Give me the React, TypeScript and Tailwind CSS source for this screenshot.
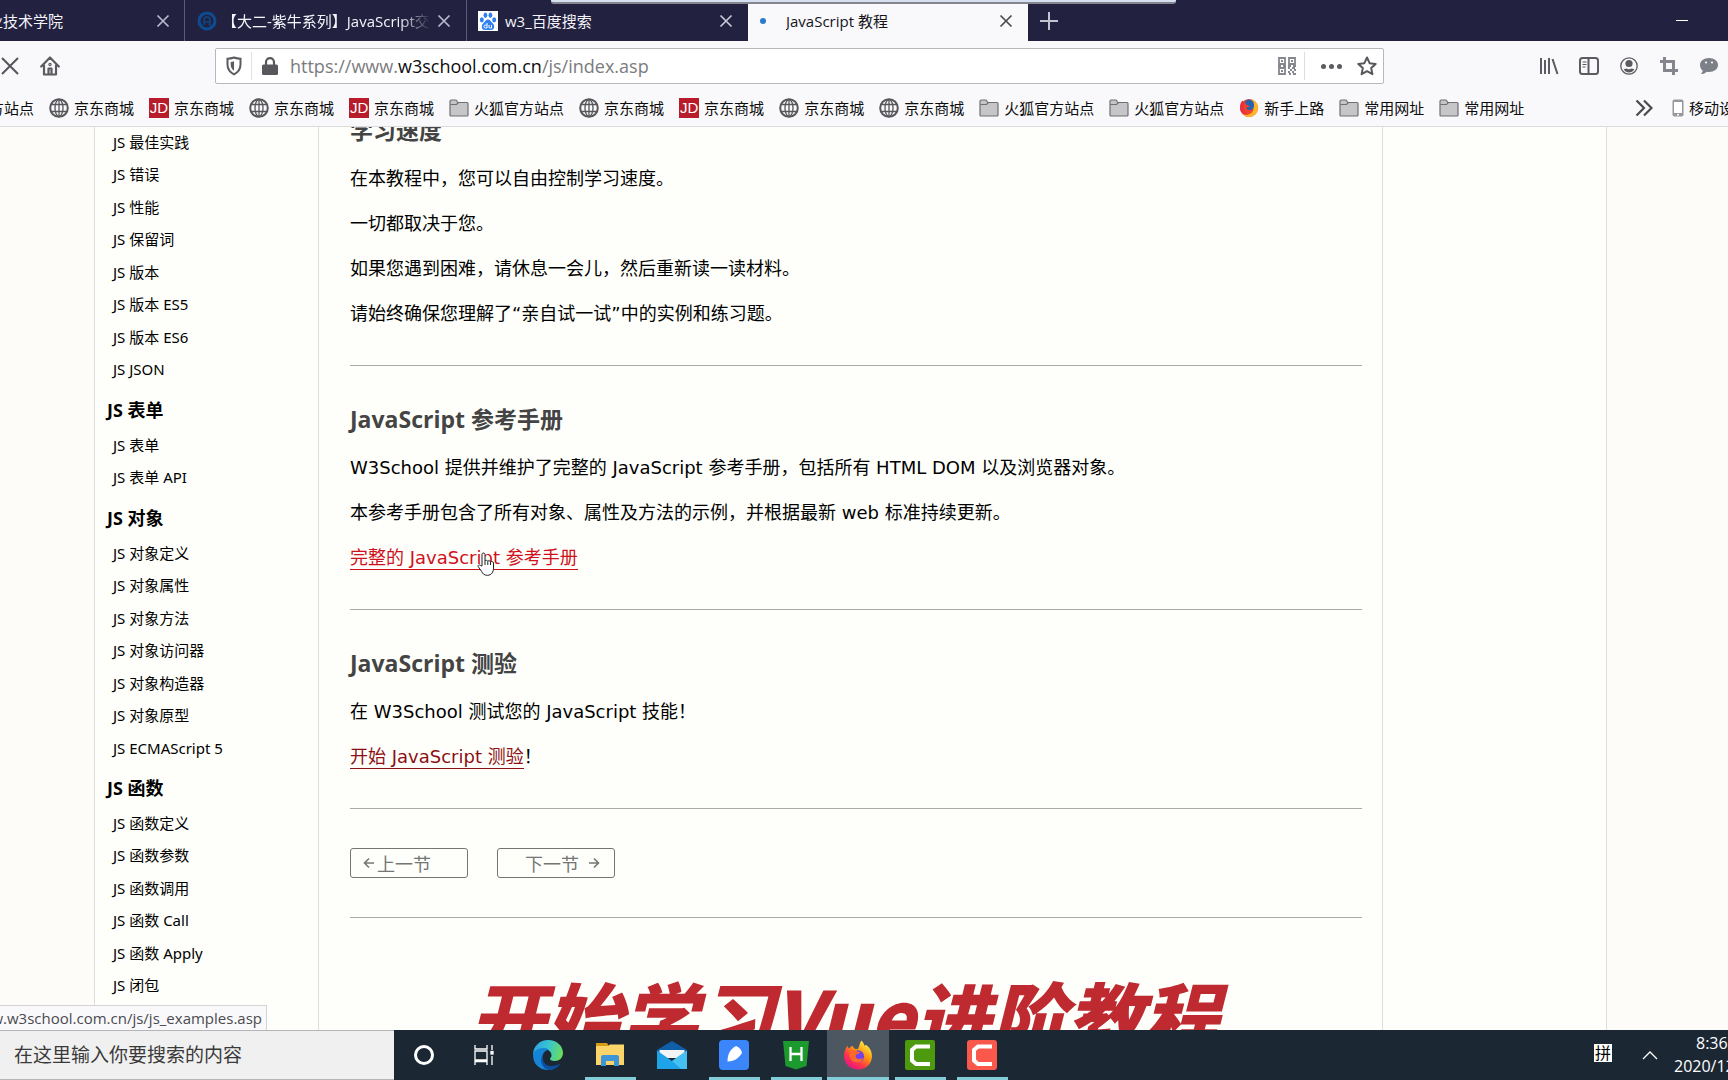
import type { ReactNode } from 'react'

type IconKind = 'globe' | 'jd' | 'folder' | 'firefox'

interface Bookmark {
  icon: IconKind
  label: string
}

interface MenuGroup {
  title?: string
  items: string[]
}

const bookmarks: Bookmark[] = [
  { icon: 'folder', label: '火狐官方站点' },
  { icon: 'globe', label: '京东商城' },
  { icon: 'jd', label: '京东商城' },
  { icon: 'globe', label: '京东商城' },
  { icon: 'jd', label: '京东商城' },
  { icon: 'folder', label: '火狐官方站点' },
  { icon: 'globe', label: '京东商城' },
  { icon: 'jd', label: '京东商城' },
  { icon: 'globe', label: '京东商城' },
  { icon: 'globe', label: '京东商城' },
  { icon: 'folder', label: '火狐官方站点' },
  { icon: 'folder', label: '火狐官方站点' },
  { icon: 'firefox', label: '新手上路' },
  { icon: 'folder', label: '常用网址' },
  { icon: 'folder', label: '常用网址' },
]

const menu: MenuGroup[] = [
  {
    items: ['JS 最佳实践', 'JS 错误', 'JS 性能', 'JS 保留词', 'JS 版本', 'JS 版本 ES5', 'JS 版本 ES6', 'JS JSON'],
  },
  { title: 'JS 表单', items: ['JS 表单', 'JS 表单 API'] },
  {
    title: 'JS 对象',
    items: ['JS 对象定义', 'JS 对象属性', 'JS 对象方法', 'JS 对象访问器', 'JS 对象构造器', 'JS 对象原型', 'JS ECMAScript 5'],
  },
  {
    title: 'JS 函数',
    items: ['JS 函数定义', 'JS 函数参数', 'JS 函数调用', 'JS 函数 Call', 'JS 函数 Apply', 'JS 闭包'],
  },
]

function CloseIcon({ className }: { className: string }) {
  return (
    <svg viewBox="0 0 14 14" className={`w-[14px] h-[14px] ${className}`} fill="none" stroke="currentColor" strokeWidth={1.7}>
      <path d="M1.5 1.5l11 11M12.5 1.5l-11 11" />
    </svg>
  )
}

function FirefoxIcon() {
  return (
    <svg viewBox="0 0 32 32" className="w-[30px] h-[30px]">
      <defs>
        <linearGradient id="fxBody" x1="0.85" y1="0.05" x2="0.2" y2="0.95">
          <stop offset="0" stopColor="#fff44f" />
          <stop offset="0.4" stopColor="#ff980e" />
          <stop offset="0.7" stopColor="#ff3647" />
          <stop offset="1" stopColor="#e31587" />
        </linearGradient>
      </defs>
      <path
        d="M19.5 0.5c2 2 3 3.6 3.2 5.4 1-.5 1.6-.8 2.2-.6 3.8 2.8 6 6.8 6 11.7C30.900 25.500 24.300 31.500 16 31.500S1 25.500 1 17c0-4.500 1.800-8 3.500-11 .6 1.200 1 2 2 3 1-1.300 2.300-2.200 4-2.800.2 1.600 1 2.700 2.500 3.300h3c1.500-2.500 1.500-6 3.500-9z"
        fill="url(#fxBody)"
      />
      <circle cx="16" cy="17.5" r="6.5" fill="#7542e5" />
      <path d="M7 13c2.500-2 5-2.500 8-1 1 .6 2.200.8 3.500.6-.4 1.800-2 2.200-4 2.600-1.500 1-1.500 3.800 1 4.800 2.500.8 4-.6 6-.6-1.500 3.600-4.500 5-8 4.300C8.500 22.600 6 18.500 7 13z" fill="#ff6a2a" />
    </svg>
  )
}

function BookmarkIcon({ kind }: { kind: IconKind }) {
  if (kind === 'jd') {
    return (
      <span className="w-5 h-5 shrink-0 bg-[#b81c2b] text-white text-[15px] leading-5 text-center font-['Liberation_Sans',sans-serif]">
        JD
      </span>
    )
  }
  if (kind === 'firefox') {
    return (
      <svg viewBox="0 0 20 20" className="w-5 h-5 shrink-0">
        <circle cx="10" cy="10" r="9" fill="#f0412c" />
        <path d="M12 1c4 1 7 4.500 7 9 0 5-4 9-9 9-3 0-5-1-6.500-3 5 2 10.500 0 11-5.500C15 6 14 3.500 12 1z" fill="#ffb42a" />
        <path d="M1 10C1 6 2 4 3.500 2.500c.5 1 1 1.500 2 2-1.500 4-1.500 8.500 3 12C4 16.500 1 14 1 10z" fill="#e8313c" />
        <path d="M6 3.500C8 1 12 1 14 3.500c2 3.500 1 8-2.500 8.500C8 12.500 7 10.500 8 9.500c1-.8 2-.3 3-1.200C9 7.500 6.500 7 6 3.500z" fill="#2364b0" />
      </svg>
    )
  }
  if (kind === 'folder') {
    return (
      <svg viewBox="0 0 20 20" className="w-5 h-5 shrink-0">
        <path d="M1 3.500c0-.8.5-1.500 1.300-1.500H7l2 2.500h9c.6 0 1 .4 1 1V17c0 .6-.4 1-1 1H2c-.6 0-1-.4-1-1z" fill="#c6c6c8" stroke="#6f6f72" strokeWidth={1.2} />
        <path d="M1.500 6.500h6L9.500 4.500" fill="none" stroke="#6f6f72" strokeWidth={1.2} />
      </svg>
    )
  }
  return (
    <svg viewBox="0 0 20 20" className="w-5 h-5 shrink-0" fill="none" stroke="#57575b">
      <circle cx="10" cy="10" r="8.8" strokeWidth={2} />
      <ellipse cx="10" cy="10" rx="4" ry="8.5" strokeWidth={1.3} />
      <path d="M2.500 6.500h15M2.500 13.500h15M10 1.500v17" strokeWidth={1.3} />
    </svg>
  )
}

function TabStrip() {
  return (
    <div className="flex h-[41px] bg-[#22213f] text-[15px] leading-5 text-[#f4f4fa]">
      <div className="w-[185px] shrink-0 flex items-center justify-between pr-[14px] border-r border-[#5c5b78]">
        <span className="-ml-[27px] whitespace-nowrap">职业技术学院</span>
        <button aria-label="关闭标签页">
          <CloseIcon className="text-[#b9b8cc]" />
        </button>
      </div>
      <div className="w-[282px] shrink-0 flex items-center pl-3 pr-[15px] border-r border-[#5c5b78]">
        <svg viewBox="0 0 20 20" className="w-5 h-5 shrink-0" fill="none">
          <circle cx="10" cy="10" r="8" stroke="#0e4c92" strokeWidth={3} />
          <path d="M7 14V9a3 3 0 016 0v5M7 11h6M12 13l2 2" stroke="#0f4686" strokeWidth={1.6} />
        </svg>
        <span className="flex-1 ml-[5px] overflow-hidden whitespace-nowrap [mask-image:linear-gradient(to_right,black_85%,transparent)]">
          【大二-紫牛系列】JavaScript交互
        </span>
        <button aria-label="关闭标签页" className="ml-[6px]">
          <CloseIcon className="text-[#b9b8cc]" />
        </button>
      </div>
      <div className="w-[281px] shrink-0 flex items-center pl-[11px] pr-[15px]">
        <svg viewBox="0 0 20 20" className="w-5 h-5 shrink-0">
          <rect width="20" height="20" fill="#fff" />
          <g fill="#2f7ff0">
            <ellipse cx="3.8" cy="8.8" rx="2" ry="2.6" />
            <ellipse cx="7.4" cy="4.3" rx="1.9" ry="2.7" />
            <ellipse cx="12.4" cy="4.3" rx="1.9" ry="2.7" />
            <ellipse cx="16.2" cy="8.8" rx="2" ry="2.6" />
            <path d="M10 8.500c2 0 3 2.200 4.500 3.500 2.500 2.200 2.500 7-1.500 7H7c-4 0-4-4.800-1.500-7C7 10.700 8 8.500 10 8.500z" />
          </g>
          <path d="M9 12v5M9 17H7.500a1.400 1.400 0 010-3H9M11 14v2.300c0 .5.3.7.8.7H13.500v-3" fill="none" stroke="#fff" strokeWidth={1} />
        </svg>
        <span className="flex-1 ml-[7px] truncate">w3_百度搜索</span>
        <button aria-label="关闭标签页">
          <CloseIcon className="text-[#c9c8d8]" />
        </button>
      </div>
      <div className="w-[280px] shrink-0 flex items-center pl-3 pr-[15px] bg-[#f9f9fb] text-[#15141a]">
        <span className="w-[6px] h-[6px] rounded-full bg-[#2a7bd0]" />
        <span className="flex-1 ml-5 truncate">JavaScript 教程</span>
        <button aria-label="关闭标签页">
          <CloseIcon className="text-[#4a4a4f]" />
        </button>
      </div>
      <button aria-label="新建标签页" className="w-[42px] flex items-center justify-center">
        <svg viewBox="0 0 18 18" className="w-[18px] h-[18px]" stroke="#c4c3d2" strokeWidth={2}>
          <path d="M9 0v18M0 9h18" />
        </svg>
      </button>
      <div className="flex-1" />
      <button aria-label="最小化" className="w-[92px] flex items-center">
        <span className="ml-10 w-3 h-px bg-white" />
      </button>
    </div>
  )
}

function ToolButton({ label, children }: { label: string; children: ReactNode }) {
  return (
    <button aria-label={label} className="w-10 h-9 shrink-0 flex items-center justify-center text-[#5b5b60]">
      {children}
    </button>
  )
}

function NavBar() {
  return (
    <div className="flex items-center h-[50px]">
      <button aria-label="停止" className="w-[30px] h-9 flex items-center text-[#55555a]">
        <svg viewBox="0 0 18 18" className="w-[18px] h-[18px] ml-px" fill="none" stroke="currentColor" strokeWidth={2}>
          <path d="M1 1l16 16M17 1L1 17" />
        </svg>
      </button>
      <ToolButton label="主页">
        <svg viewBox="0 0 20 20" className="w-5 h-5" fill="none" stroke="currentColor" strokeWidth={2.2} strokeLinejoin="round" strokeLinecap="round">
          <path d="M1.200 10.500L10 1.500l8.800 9M4 9.500V18.500h12V9.500M8.500 18v-5.500h3V18" />
          <circle cx="10" cy="8.5" r="0.6" />
        </svg>
      </ToolButton>
      <div className="flex-1 ml-[145px] h-9 flex items-center bg-white border border-[#b8b8bc] rounded-[2px]">
        <button aria-label="跟踪保护" className="w-9 h-7 flex items-center justify-center border-r border-[#e2e2e4]">
          <svg viewBox="0 0 18 20" className="w-[18px] h-5">
            <path d="M9 1.500c2.200.8 4.400 1.200 6.500 1.300v5.600c0 4.600-2.500 7.800-6.500 10-4-2.200-6.500-5.400-6.500-10V2.800c2.100-.1 4.300-.5 6.500-1.300z" fill="none" stroke="#5b5b60" strokeWidth={2} />
            <path d="M9 5.200v9.600c-2.200-1.600-3.300-3.500-3.300-6V6c1.100-.1 2.200-.4 3.300-.8z" fill="#5b5b60" />
          </svg>
        </button>
        <button aria-label="站点信息" className="w-9 h-7 flex items-center justify-center">
          <svg viewBox="0 0 16 18" className="w-4 h-[18px]">
            <rect x="0" y="7.500" width="16" height="10.500" rx="1.500" fill="#58585c" />
            <path d="M4 8V5.200a4 4 0 018 0V8" fill="none" stroke="#58585c" strokeWidth={2.2} />
          </svg>
        </button>
        <a href="https://www.w3school.com.cn/js/index.asp" className="ml-[2px] flex-1 text-[18px] leading-6 text-[#7b7b7e]">
          https://www.<span className="text-[#0c0c0d]">w3school.com.cn</span>/js/index.asp
        </a>
        <button aria-label="二维码" className="w-9 h-7 flex items-center justify-center border-r border-[#dedee0]">
          <svg viewBox="0 0 18 18" className="w-[18px] h-[18px]" fill="none" stroke="#85878e" strokeWidth={1.8}>
            <path d="M1 1h6v6H1zM11 1h6v6h-6zM1 11h6v6H1z" />
            <path d="M3 4h2M13 4h2M3 14h2M0 9h3M5 9h3M10 9h3M15 9h3M10 11h2M14 11h3M12 13h2M16 13h2M10 15h2M14 15h2M11 17h2M15 17h3" />
          </svg>
        </button>
        <button aria-label="页面操作" className="w-[52px] h-7 flex items-center justify-center gap-[3px]">
          <span className="w-[5px] h-[5px] rounded-full bg-[#5b5b60]" />
          <span className="w-[5px] h-[5px] rounded-full bg-[#5b5b60]" />
          <span className="w-[5px] h-[5px] rounded-full bg-[#5b5b60]" />
        </button>
        <button aria-label="加入书签" className="w-[26px] h-7 flex items-center">
          <svg viewBox="0 0 20 20" className="w-5 h-5" fill="none" stroke="#58585c" strokeWidth={2} strokeLinejoin="round">
            <path d="M10 1.500l2.600 5.700 6.100.7-4.500 4.200 1.200 6.100L10 15.200l-5.400 3 1.200-6.100L1.300 7.900l6.100-.7z" />
          </svg>
        </button>
      </div>
      <div className="flex ml-[145px] -mr-px">
        <ToolButton label="书库">
          <svg viewBox="0 0 20 18" className="w-5 h-[18px]" stroke="currentColor" strokeWidth={2} fill="none">
            <path d="M2 1v16M6 3v14M10 1v16M13.500 2l5 15" />
          </svg>
        </ToolButton>
        <ToolButton label="侧栏">
          <svg viewBox="0 0 20 18" className="w-5 h-[18px]" stroke="currentColor" fill="none">
            <rect x="1" y="1" width="18" height="16" rx="2.500" strokeWidth={2} />
            <path d="M9.500 1v16" strokeWidth={2} />
            <path d="M3.500 5h4M3.500 7.500h4M3.500 10h3" strokeWidth={1.2} />
          </svg>
        </ToolButton>
        <ToolButton label="账户">
          <svg viewBox="0 0 18 18" className="w-[18px] h-[18px]" fill="currentColor">
            <circle cx="9" cy="9" r="8.2" fill="none" stroke="currentColor" strokeWidth={1.3} />
            <circle cx="9" cy="6.500" r="3.6" />
            <path d="M3.500 11.500c1 1 2 .2 3.200 0 1.300.9 3.300.9 4.600 0 1.200.2 2.200 1 3.200 0-.8 2.500-3 4-5.500 4s-4.700-1.500-5.500-4z" />
          </svg>
        </ToolButton>
        <ToolButton label="截图">
          <svg viewBox="0 0 18 18" className="w-[18px] h-[18px]" fill="none" stroke="#85858e" strokeWidth={3}>
            <path d="M4.500 0v13.500H18M0 4.500h13.500V18" />
          </svg>
        </ToolButton>
        <ToolButton label="消息">
          <svg viewBox="0 0 20 18" className="w-5 h-[18px]">
            <path d="M10 1c5.200 0 9 3 9 7s-3.800 7-9 7c-.8 0-1.600-.1-2.400-.3C6.300 16.200 4.500 17 2 17c1.200-1.200 1.600-2.300 1.600-3.500C2 12.200 1 10.300 1 8c0-4 3.800-7 9-7z" fill="#7d8089" />
            <circle cx="7" cy="5.500" r="1.1" fill="#f9f9fb" />
            <circle cx="13" cy="5.500" r="1.1" fill="#f9f9fb" />
          </svg>
        </ToolButton>
      </div>
    </div>
  )
}

function BookmarksBar() {
  return (
    <div className="flex items-center h-[36px] pb-px overflow-hidden border-b border-[#dcdcdc] text-[15px] leading-5 text-[#0c0c0d]">
      <div className="flex-1 -ml-[81px] flex gap-[15px]">
        {bookmarks.map((b, i) => (
          <a key={i} href="#" className="flex items-center gap-[5px] shrink-0 whitespace-nowrap">
            <BookmarkIcon kind={b.icon} />
            {b.label}
          </a>
        ))}
      </div>
      <button aria-label="更多书签" className="w-5 mr-[14px]">
        <svg viewBox="0 0 18 18" className="w-[18px] h-[18px] ml-px" fill="none" stroke="#4a4a4f" strokeWidth={2.2}>
          <path d="M1.500 1.500L9 9l-7.500 7.500M9 1.500L16.500 9 9 16.500" />
        </svg>
      </button>
      <a href="#" className="w-[60px] flex items-center gap-[5px] whitespace-nowrap">
        <svg viewBox="0 0 12 18" className="w-3 h-[18px] shrink-0 ml-1">
          <rect x="0.500" y="0.500" width="11" height="17" rx="2" fill="#98989c" />
          <rect x="2" y="3" width="8" height="11" fill="#fff" />
          <circle cx="6" cy="15.800" r="1" fill="#fff" />
        </svg>
        移动设备上的书签
      </a>
    </div>
  )
}

function SideMenu() {
  return (
    <nav className="w-[225px] shrink-0 border-x border-[#dededc] -mt-px text-black font-['Noto_Sans','Noto_Sans_CJK_SC',sans-serif]">
      {menu.map((group, i) => (
        <div key={i}>
          {group.title && <h3 className="pt-[5px] pl-3 text-[18px] leading-[38px] font-bold">{group.title}</h3>}
          <ul className="pl-[18px] text-[15px]">
            {group.items.map((item) => (
              <li key={item} className="leading-8 even:leading-[33px]">
                <a href="#">{item}</a>
              </li>
            ))}
          </ul>
        </div>
      ))}
    </nav>
  )
}

function HandCursor() {
  return (
    <svg viewBox="0 0 18 24" className="absolute left-[127px] top-[8px] w-[18px] h-6">
      <path
        d="M5 14V2.500a1.500 1.500 0 013 0V9c0-1 2.600-1 2.800.3.3-.9 2.500-.8 2.700.5.5-.7 3-.5 3 1.200v5c0 4-2 7.300-6 7.300-3.500 0-4.800-1.600-6-4L1.200 14.600c-.6-1.300 1-2.400 2.200-1.200z"
        fill="#fff"
        stroke="#222"
        strokeWidth={1}
      />
      <path d="M8 9v4M10.800 9.500V13M13.500 10v3" stroke="#222" strokeWidth={1} />
    </svg>
  )
}

function Article() {
  return (
    <main className="flex-1 min-w-0 pl-[31px] pr-5 text-[18px] text-black font-['DejaVu_Sans','Noto_Sans_CJK_SC',sans-serif] [&_p]:leading-[27px] [&_p]:mb-[18px] [&_h2]:mb-[19px] [&_h2]:font-['Open_Sans','Noto_Sans_CJK_SC',sans-serif] [&_h2]:text-[23px] [&_h2]:leading-8 [&_h2]:font-bold [&_h2]:text-[#444]">
      <section className="-mt-[13px] pb-5 border-b border-[#aaa]">
        <h2>学习速度</h2>
        <p>在本教程中，您可以自由控制学习速度。</p>
        <p>一切都取决于您。</p>
        <p>如果您遇到困难，请休息一会儿，然后重新读一读材料。</p>
        <p>请始终确保您理解了“亲自试一试”中的实例和练习题。</p>
      </section>
      <section className="pt-[37px] pb-5 border-b border-[#aaa]">
        <h2>JavaScript 参考手册</h2>
        <p>W3School 提供并维护了完整的 JavaScript 参考手册，包括所有 HTML DOM 以及浏览器对象。</p>
        <p>本参考手册包含了所有对象、属性及方法的示例，并根据最新 web 标准持续更新。</p>
        <p className="relative">
          <a href="#" className="inline-block leading-[22px] border-b border-[#d0101c] text-[#d0101c]">
            完整的 JavaScript 参考手册
          </a>
          <HandCursor />
        </p>
      </section>
      <section className="pt-[37px] pb-5 border-b border-[#aaa]">
        <h2>JavaScript 测验</h2>
        <p>在 W3School 测试您的 JavaScript 技能！</p>
        <p>
          <a href="#" className="inline-block leading-[22px] border-b border-[#8b0f14] text-[#8b0f14]">
            开始 JavaScript 测验
          </a>
          ！
        </p>
      </section>
      <div className="flex gap-[29px] py-[39px] border-b border-[#aaa] font-['Noto_Sans_CJK_SC',sans-serif] text-[#757575]">
        <a href="#" className="w-[118px] h-[30px] pl-3 flex items-center gap-[2px] border border-[#757575] rounded-[3px]">
          <svg viewBox="0 0 12 12" className="w-3 h-3" fill="none" stroke="currentColor" strokeWidth={1.6}>
            <path d="M11 6H1.500M6 1.500L1.500 6 6 10.500" />
          </svg>
          上一节
        </a>
        <a href="#" className="w-[118px] h-[30px] pr-[14px] flex items-center justify-end gap-[9px] border border-[#757575] rounded-[3px]">
          下一节
          <svg viewBox="0 0 12 12" className="w-3 h-3" fill="none" stroke="currentColor" strokeWidth={1.6}>
            <path d="M1 6h9.500M6 1.500L10.500 6 6 10.500" />
          </svg>
        </a>
      </div>
      <a href="#" className="block pt-[46px] pr-6 text-center text-[76px] leading-[100px] font-black italic whitespace-nowrap text-[#bf2a31] font-['Noto_Sans_CJK_SC',sans-serif]">
        开始学习Vue进阶教程
      </a>
    </main>
  )
}

function TaskItem({ label, line, active, children }: { label: string; line?: boolean; active?: boolean; children: ReactNode }) {
  return (
    <button
      aria-label={label}
      className={`w-[62px] h-full flex flex-col items-center justify-between pt-[10px] ${active ? 'bg-[#4c5761]' : ''}`}
    >
      {children}
      <span className={`h-[3px] ${active ? 'w-full' : 'w-[51px]'} ${line || active ? 'bg-[#83cdd8]' : ''}`} />
    </button>
  )
}

function TaskBar() {
  return (
    <footer className="flex h-[50px] shrink-0 bg-[#1b2834] text-white">
      <input
        aria-label="搜索"
        placeholder="在这里输入你要搜索的内容"
        className="w-[394px] shrink-0 pl-[14px] bg-[#f0f0f0] border-y border-[#b5b5b5] text-[19px] placeholder:text-[#3a3a3a] outline-none"
      />
      <button aria-label="Cortana" className="w-[60px] flex items-center justify-center">
        <span className="w-5 h-5 rounded-full border-[3px] border-white" />
      </button>
      <button aria-label="任务视图" className="w-[60px] mr-[3px] flex items-center justify-center">
        <svg viewBox="0 0 20 20" className="w-5 h-5" fill="none" stroke="#fff" strokeWidth={1.3}>
          <path d="M1 0v4h12V0M1 6h12v9H1zM1 20v-3.500h12V20M18 0v5M18 11v9" />
          <rect x="17" y="6.500" width="2" height="2.500" fill="#fff" />
        </svg>
      </button>
      <TaskItem label="Edge">
        <svg viewBox="0 0 30 30" className="w-[30px] h-[30px]">
          <defs>
            <linearGradient id="edgeTop" x1="0" y1="0.3" x2="1" y2="0.5">
              <stop offset="0" stopColor="#2f9fe0" />
              <stop offset="0.5" stopColor="#38c6d0" />
              <stop offset="1" stopColor="#6bdc5a" />
            </linearGradient>
          </defs>
          <path d="M0 15C0 6 7 0 15 0c9 0 15 6 15 13 0 5-4 8-8 8-3.500 0-5.500-1.500-5-2.500 1-1 1.500-2 1.500-3.500 0-3-3-6-8-6-5.500 0-9 3-10.500 6z" fill="url(#edgeTop)" />
          <path d="M0 15c.5-4 5-7 10.500-7 2 0 4 .5 5.500 1.500-4 .5-6.500 4-6.500 8 0 6 5 10.500 10.500 12C9 32 0 25.500 0 15z" fill="#1585d8" />
          <path d="M10.500 13.500c-3 6 1 12.500 8 12.500 3.500 0 6.500-1 9-2.800C25.500 27 21 30 16 30 9 29 5.500 19 10.500 13.500z" fill="#0b4f9e" />
        </svg>
      </TaskItem>
      <TaskItem label="文件资源管理器" line>
        <svg viewBox="0 0 30 30" className="w-[30px] h-[30px]">
          <path d="M1 3h11l2 3h-2L1 8z" fill="#d79b1a" />
          <path d="M1 6h12l2-1.500h14V25H1z" fill="#fbd569" />
          <path d="M6 26V17c0-1 .7-2 2-2h14c1.300 0 2 1 2 2v9h-5v-5h-8v5z" fill="#3f96d6" />
        </svg>
      </TaskItem>
      <TaskItem label="邮件">
        <svg viewBox="0 0 30 30" className="w-[30px] h-[30px]">
          <path d="M0 10L15 1l15 9v5H0z" fill="#0f5ea8" />
          <path d="M2.500 10h25v8h-25z" fill="#f2f4f6" />
          <path d="M0 10.500L15 21 30 10.500V29H0z" fill="#1ea2e8" />
          <path d="M15 21l15-10.500V29H24z" fill="#46c0f2" />
        </svg>
      </TaskItem>
      <TaskItem label="笔记" line>
        <svg viewBox="0 0 30 30" className="w-[30px] h-[30px]">
          <rect width="30" height="30" rx="4" fill="#3c86fb" />
          <path d="M8.500 21.500c0-6 1.500-11.500 8.500-15.500 3.500 1.500 5.500 3.500 6 7-3 5-7 8-14.500 8.500z" fill="#fff" />
        </svg>
      </TaskItem>
      <TaskItem label="HBuilder" line>
        <svg viewBox="0 0 30 30" className="w-[30px] h-[30px]">
          <path d="M2 1h26l-2.500 25L15 29.500 4.500 26z" fill="#1d9a2e" />
          <path d="M9.500 7v14M20.500 7v14M9.500 14h11" stroke="#fff" strokeWidth={2.3} fill="none" />
        </svg>
      </TaskItem>
      <TaskItem label="Firefox" active>
        <FirefoxIcon />
      </TaskItem>
      <TaskItem label="Camtasia" line>
        <svg viewBox="0 0 30 30" className="w-[30px] h-[30px]">
          <rect width="30" height="30" rx="2" fill="#4d9a0e" />
          <path d="M25 6.500H11L7 10v10.500L11 24h14" stroke="#fff" strokeWidth={4} fill="none" />
        </svg>
      </TaskItem>
      <TaskItem label="Camtasia Recorder" line>
        <svg viewBox="0 0 30 30" className="w-[30px] h-[30px]">
          <rect width="30" height="30" rx="3" fill="#f9584a" />
          <path d="M25 6.500H11L7 10v10.500L11 24h14" stroke="#fff" strokeWidth={4} fill="none" />
        </svg>
      </TaskItem>
      <div className="flex-1" />
      <div className="flex items-center">
        <span className="w-[18px] h-[18px] mb-1 bg-white text-black text-[16px] leading-[18px] text-center">拼</span>
        <button aria-label="显示隐藏的图标" className="w-[58px] pl-[18px] flex justify-center">
          <svg viewBox="0 0 16 9" className="w-4 h-[9px]" fill="none" stroke="#fff" strokeWidth={1.3}>
            <path d="M1 8l7-7 7 7" />
          </svg>
        </button>
        <div className="w-[58px] pl-1 text-[16px] leading-[23px] whitespace-nowrap overflow-hidden">
          <div className="pl-[22px]">8:36</div>
          <div>2020/12/</div>
        </div>
      </div>
    </footer>
  )
}

export default function App() {
  return (
    <div className="relative h-screen flex flex-col overflow-hidden bg-[#fdfcf9] font-['Open_Sans','Noto_Sans_CJK_SC',sans-serif]">
      <header className="relative shrink-0 bg-[#f9f9fb]">
        <TabStrip />
        <NavBar />
        <BookmarksBar />
        {/* край панели, выглядывающей сверху */}
        <div className="absolute top-0 left-[551px] w-[625px] h-1 rounded-b-[3px] bg-[#d5e1f0] border-b-2 border-[#85858f]" />
      </header>
      <div className="flex-1 min-h-0 overflow-hidden flex pl-[94px] pr-[121px]">
        <div className="flex-1 min-w-0 flex bg-[#fefffa]">
          <SideMenu />
          <Article />
          <aside className="w-[225px] shrink-0 border-x border-[#dededc]" />
        </div>
      </div>
      <TaskBar />
      <div className="absolute left-0 bottom-[50px] w-[267px] h-[25px] flex justify-end items-center pr-1 overflow-hidden bg-[#f9f9fb] border-t border-r border-[#d4d4d4] text-[15px] text-[#4a4a4f] whitespace-nowrap">
        https://www.w3school.com.cn/js/js_examples.asp
      </div>
    </div>
  )
}
